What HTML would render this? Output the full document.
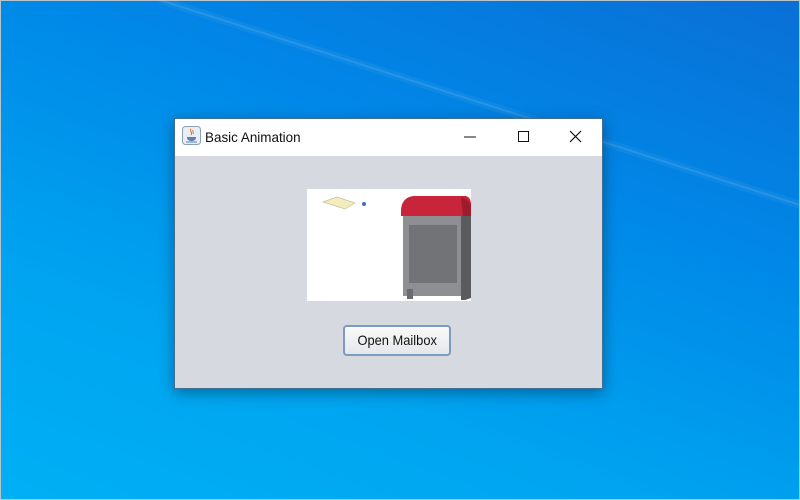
<!DOCTYPE html>
<html><head><style>
html,body{margin:0;padding:0}
body{width:800px;height:500px;position:relative;overflow:hidden;font-family:"Liberation Sans",sans-serif;
background:linear-gradient(200deg,#0a6fd6 0%,#0088e8 35%,#00a4f0 70%,#00b0f5 100%);}
.frame{position:absolute;inset:0;border:1px solid #b8c4cc;box-sizing:border-box}
.win{position:absolute;left:174px;top:118px;width:429px;height:271px;background:#d6d9e0;border:1px solid #3f6f96;box-sizing:border-box;box-shadow:0 4px 14px rgba(0,0,0,.35)}
.tb{position:absolute;left:0;top:0;right:0;height:37px;background:#fff}
.title{position:absolute;left:30px;top:10px;font-size:14px;color:#111;transform:scaleX(.96);transform-origin:left}
.img{position:absolute;left:132px;top:70px;width:164px;height:112px;background:#fff;overflow:hidden}
.btn{position:absolute;left:168px;top:206px;width:108px;height:31px;box-sizing:border-box;border:2px solid #7a9cc2;border-radius:4px;background:linear-gradient(#fafafa,#e4e6ea);font-size:14px;text-align:center;line-height:27px;color:#111}
.btn span{display:inline-block;transform:scaleX(.92)}
</style></head><body>
<svg style="position:absolute;left:0;top:0" width="800" height="500"><line x1="160" y1="0" x2="800" y2="205" stroke="rgba(255,255,255,0.1)" stroke-width="2"/><line x1="160" y1="0" x2="800" y2="205" stroke="rgba(255,255,255,0.05)" stroke-width="8"/></svg>
<div class="frame"></div>
<div class="win">
<div class="tb">
<svg style="position:absolute;left:7px;top:7px" width="20" height="20"><rect x="0.5" y="0.5" width="18" height="18" rx="3" fill="#e8eef4" stroke="#8aa0b8"/><path d="M9 3c-2 2 2 3 0 6M11 4c-1 1 1 2 0 4" stroke="#e07020" fill="none"/><path d="M5 11h9c0 3-2 4-4.5 4S5 14 5 11z" fill="#5a7fb0"/><path d="M4 16h11" stroke="#5a7fb0"/></svg>
<div class="title">Basic Animation</div>
<svg style="position:absolute;left:280px;top:8px" width="140" height="20"><path d="M9 10h12" stroke="#111"/><rect x="63.5" y="4.5" width="10" height="10" fill="none" stroke="#111"/><path d="M115 4l11 11M126 4l-11 11" stroke="#111" stroke-width="1.2"/></svg>
</div>
<div class="img">
<svg width="164" height="112"><path d="M16 13l14-5 18 6-10 6z" fill="#f2ecc0" stroke="#c8c090" stroke-width=".7"/><circle cx="57" cy="15" r="2" fill="#3a70c0"/>
<path d="M94 22c0-10 6-15 14-15h50c4 0 6 4 6 8v12H94z" fill="#c8243a"/><path d="M154 8c6 2 10 6 10 10v9h-8z" fill="#9c1c2c"/>
<path d="M96 27h58v80H96z" fill="#8e8f93"/><path d="M154 27h10v82l-6 2h-4z" fill="#5a5b5f"/><rect x="102" y="36" width="48" height="58" fill="#727377"/><rect x="100" y="100" width="6" height="10" fill="#6a6b6f"/></svg>
</div>
<div class="btn"><span>Open Mailbox</span></div>
</div>
</body></html>
